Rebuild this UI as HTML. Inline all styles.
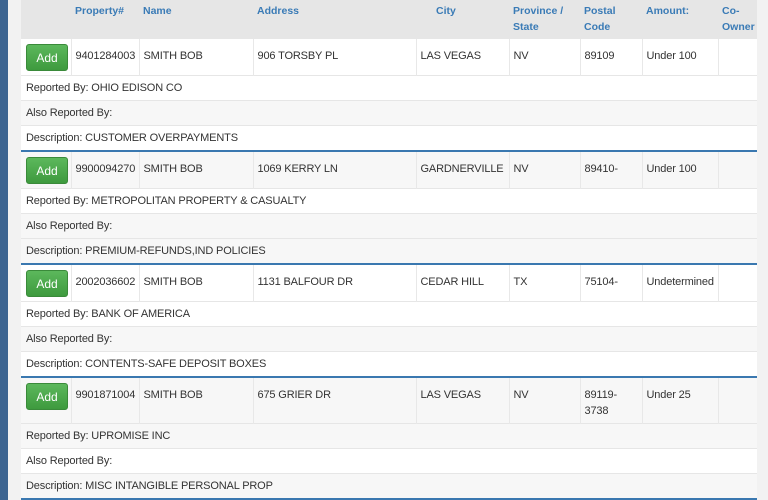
<!DOCTYPE html>
<html><head><style>
body{margin:0;width:768px;height:500px;overflow:hidden;background:#f2f2f2;font-family:"Liberation Sans",Arial,sans-serif;font-size:11px;letter-spacing:-0.15px;color:#333;position:relative}
.strip{position:absolute;left:0;top:0;width:8px;height:500px;background:#3d6591}
.wrap{position:absolute;left:21px;top:0;width:736px;background:#fff}
table{border-collapse:collapse;width:736px;table-layout:fixed}
th{background:#e6e6e6;color:#3a7bb6;font-weight:bold;font-size:10.5px;letter-spacing:0;text-align:left;vertical-align:top;padding:3px 4px 0 4px;height:36px;line-height:16px}
td{padding:0 4px;vertical-align:top;border-left:1px solid #e8e8e8;white-space:nowrap;overflow:hidden}
tr.m td{padding-top:9px;height:27px;line-height:16px}
tr.m td.pc{white-space:normal;padding-bottom:4px}
tr.m td:first-child{padding:5px 4px 0 4px;height:31px;border-left:none}
tr.s td{height:24px;line-height:24px;border-top:1px solid #e6e6e6;border-left:none;padding-left:5px}
tr.g td{background:#f7f7f7}
tr.end td{border-bottom:2px solid #3a78b0;}
.btn{display:block;width:42px;height:27px;margin-left:1px;background:linear-gradient(#5cb85c,#3e9a3e);border:1px solid #3a8a3a;border-radius:3px;color:#fff;font-size:12px;letter-spacing:0;line-height:27px;text-align:center;box-sizing:border-box}
</style></head><body>
<div class="strip"></div>
<div class="wrap"><table>
<colgroup><col style="width:50px"><col style="width:68px"><col style="width:114px"><col style="width:163px"><col style="width:93px"><col style="width:71px"><col style="width:62px"><col style="width:76px"><col style="width:39px"></colgroup>
<tr><th></th><th>Property#</th><th>Name</th><th>Address</th><th style="padding-left:20px">City</th><th>Province / State</th><th>Postal Code</th><th>Amount:</th><th>Co-Owner</th></tr>
<tr class="m"><td><span class="btn">Add</span></td><td>9401284003</td><td>SMITH BOB</td><td>906 TORSBY PL</td><td>LAS VEGAS</td><td>NV</td><td>89109</td><td>Under 100</td><td></td></tr>
<tr class="s"><td colspan="9">Reported By: OHIO EDISON CO</td></tr>
<tr class="s g"><td colspan="9">Also Reported By:</td></tr>
<tr class="s end"><td colspan="9">Description: CUSTOMER OVERPAYMENTS</td></tr>
<tr class="m g"><td><span class="btn">Add</span></td><td>9900094270</td><td>SMITH BOB</td><td>1069 KERRY LN</td><td>GARDNERVILLE</td><td>NV</td><td>89410-</td><td>Under 100</td><td></td></tr>
<tr class="s"><td colspan="9">Reported By: METROPOLITAN PROPERTY &amp; CASUALTY</td></tr>
<tr class="s g"><td colspan="9">Also Reported By:</td></tr>
<tr class="s g end"><td colspan="9">Description: PREMIUM-REFUNDS,IND POLICIES</td></tr>
<tr class="m"><td><span class="btn">Add</span></td><td>2002036602</td><td>SMITH BOB</td><td>1131 BALFOUR DR</td><td>CEDAR HILL</td><td>TX</td><td>75104-</td><td>Undetermined</td><td></td></tr>
<tr class="s"><td colspan="9">Reported By: BANK OF AMERICA</td></tr>
<tr class="s g"><td colspan="9">Also Reported By:</td></tr>
<tr class="s end"><td colspan="9">Description: CONTENTS-SAFE DEPOSIT BOXES</td></tr>
<tr class="m g"><td><span class="btn">Add</span></td><td>9901871004</td><td>SMITH BOB</td><td>675 GRIER DR</td><td>LAS VEGAS</td><td>NV</td><td class="pc">89119-<br>3738</td><td>Under 25</td><td></td></tr>
<tr class="s g"><td colspan="9">Reported By: UPROMISE INC</td></tr>
<tr class="s"><td colspan="9">Also Reported By:</td></tr>
<tr class="s g end"><td colspan="9">Description: MISC INTANGIBLE PERSONAL PROP</td></tr>
</table></div>
</body></html>
